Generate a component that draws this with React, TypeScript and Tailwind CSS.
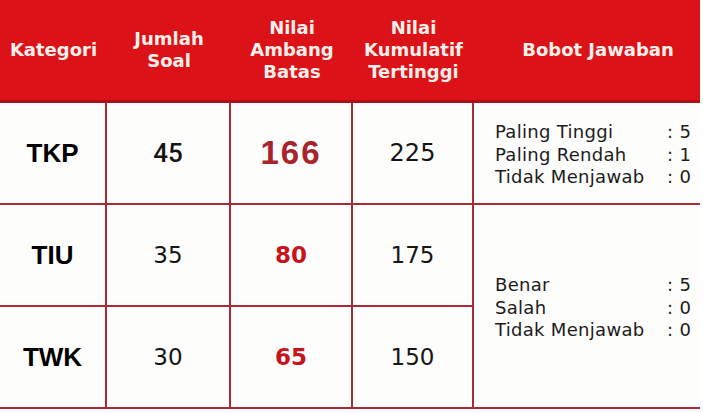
const head = "font-['DejaVu_Sans',sans-serif]";
const arial = "font-['Liberation_Sans',Arial,sans-serif]";

const headers = [
  ["Kategori"],
  ["Jumlah", "Soal"],
  ["Nilai", "Ambang", "Batas"],
  ["Nilai", "Kumulatif", "Tertinggi"],
  ["Bobot Jawaban"],
];

const rows = [
  { k: "TKP", n: "45", a: "166", t: "225" },
  { k: "TIU", n: "35", a: "80", t: "175" },
  { k: "TWK", n: "30", a: "65", t: "150" },
];

function Bobot({ items }: { items: [string, string][] }) {
  return (
    <div className={`grid grid-cols-[172px_auto] text-[18px] leading-[22.5px] tracking-[0.3px] text-[#1b1b1b] ${head}`}>
      {items.map(([l, v]) => (
        <div key={l} className="contents">
          <span>{l}</span>
          <span>: {v}</span>
        </div>
      ))}
    </div>
  );
}

export default function App() {
  return (
    <div className="w-[703px] h-[412px] bg-white overflow-hidden">
      <div className="grid w-[700px] grid-cols-[107px_124px_122px_121px_226px] grid-rows-[103px_102px_102px_102px]">
        {headers.map((h, i) => (
          <div
            key={i}
            className={`flex flex-col items-center justify-center bg-[#dc1219] border-b-[3px] border-[#b10f17] text-center text-[18px] font-semibold leading-[22px] text-[#fdf0ea] ${head} ${
              i === 4 ? "pl-[22px]" : ""
            }`}
          >
            {h.map((l) => (
              <span key={l}>{l}</span>
            ))}
          </div>
        ))}

        {rows.map((r, i) => (
          <div key={r.k} className="contents">
            <div className={`flex items-center justify-center border-r-2 border-b-2 border-[#a72a36] bg-[#fdfdfc] text-[26px] font-bold text-black ${arial}`}>
              {r.k}
            </div>
            <div
              className={`flex items-center justify-center border-r-2 border-b-2 border-[#a72a36] bg-[#fdfdfc] text-[#151515] ${
                i === 0 ? "font-['Roboto',Arial,sans-serif] text-[26px] font-medium" : `${head} text-[23px]`
              }`}
            >
              {r.n}
            </div>
            <div
              className={`flex items-center justify-center border-r-2 border-b-2 border-[#a72a36] bg-[#fdfdfc] font-bold ${
                i === 0
                  ? `${arial} text-[33px] tracking-[2px] text-[#a8232b]`
                  : `${head} text-[23px] text-[#c8141c]`
              }`}
            >
              {r.a}
            </div>
            <div className={`flex items-center justify-center border-r-2 border-b-2 border-[#a72a36] bg-[#fdfdfc] text-[#151515] ${head} ${i === 0 ? "text-[24px]" : "text-[23px]"}`}>
              {r.t}
            </div>
            {i === 0 && (
              <div className="flex items-center border-b-2 border-[#a72a36] bg-[#fdfdfc] pl-[21px] pt-[4px]">
                <Bobot
                  items={[
                    ["Paling Tinggi", "5"],
                    ["Paling Rendah", "1"],
                    ["Tidak Menjawab", "0"],
                  ]}
                />
              </div>
            )}
            {i === 1 && (
              <div className="row-span-2 flex items-center border-b-2 border-[#a72a36] bg-[#fdfdfc] pl-[21px] pt-[4px]">
                <Bobot
                  items={[
                    ["Benar", "5"],
                    ["Salah", "0"],
                    ["Tidak Menjawab", "0"],
                  ]}
                />
              </div>
            )}
          </div>
        ))}
      </div>
    </div>
  );
}
